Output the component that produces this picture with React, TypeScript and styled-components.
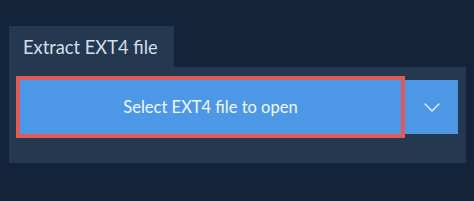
import React from 'react';
import { styled, createGlobalStyle } from 'styled-components';

const GlobalStyle = createGlobalStyle`
  html, body {
    margin: 0;
    padding: 0;
    background: #13233a;
  }
  body {
    font-family: Lato, 'Liberation Sans', sans-serif;
  }
`;

function ChevronDown() {
  return (
    <svg width="16" height="9" viewBox="0 0 16 9" fill="none">
      <path d="M1 1 L8 8 L15 1" stroke="#e6f0fb" strokeWidth="1.4" strokeLinecap="round" strokeLinejoin="round" />
    </svg>
  );
}

function App() {
  return (
    <Page>
      <GlobalStyle />
      <Widget>
        <Tab>Extract EXT4 file</Tab>
        <Panel>
          <ButtonGroup>
            <OpenButton>Select EXT4 file to open</OpenButton>
            <DropdownButton aria-label="More options">
              <ChevronDown />
            </DropdownButton>
          </ButtonGroup>
        </Panel>
      </Widget>
    </Page>
  );
}

export default App;

const Page = styled.div`
  width: 474px;
  height: 201px;
  padding: 26px 8px 0 9px;
  box-sizing: border-box;
`;

const Widget = styled.div`
  display: flex;
  flex-direction: column;
  align-items: flex-start;
`;

const Tab = styled.div`
  width: 165px;
  height: 41px;
  box-sizing: border-box;
  padding: 7px 0 0 14px;
  background: #243850;
  color: #d4dfea;
  font-size: 18.3px;
  line-height: 28px;
`;

const Panel = styled.div`
  align-self: stretch;
  height: 96px;
  box-sizing: border-box;
  padding: 13px 8px 0 11px;
  background: #243850;
`;

const ButtonGroup = styled.div`
  display: flex;
  height: 54px;
`;

const OpenButton = styled.button`
  flex: 1;
  border: none;
  background: #4c98e6;
  color: #f2f7fd;
  font-family: Lato, 'Liberation Sans', sans-serif;
  font-size: 16.5px;
  padding: 0;
  outline: 4px solid #df5b58;
  outline-offset: 0;
  position: relative;
  z-index: 1;
  cursor: pointer;
`;

const DropdownButton = styled.button`
  width: 57px;
  border: none;
  background: #4c98e6;
  display: flex;
  align-items: center;
  justify-content: center;
  padding: 0 0 0 4px;
  cursor: pointer;
`;
